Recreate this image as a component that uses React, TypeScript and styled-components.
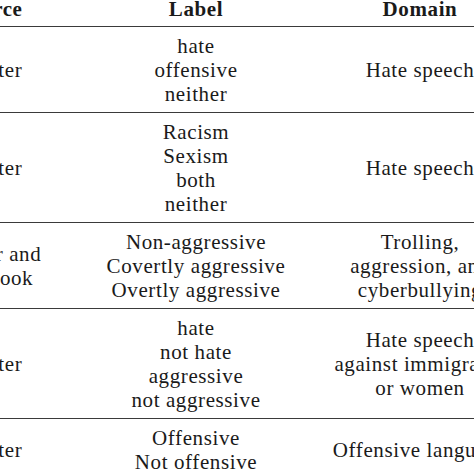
import React from "react"
import styled, { createGlobalStyle } from "styled-components"

const GlobalStyle = createGlobalStyle`
  html, body {
    margin: 0;
    padding: 0;
    background: #ffffff;
    overflow: hidden;
  }
  body {
    width: 474px;
    height: 474px;
  }
`

const COLS = "212px 200px 248px"

const Table = styled.div`
  margin: -3px 0 0 -116px;
  width: 660px;
  font-family: "Liberation Serif", "Times New Roman", serif;
  font-size: 21px;
  line-height: 24px;
  letter-spacing: 0.6px;
  color: #1a1a1a;
`

const Row = styled.div<{ $head?: boolean }>`
  display: grid;
  grid-template-columns: ${COLS};
  align-items: center;
  padding: ${(p) => (p.$head ? "0 0 5px" : "7px 0 6px")};
  border-bottom: 1px solid #3a3a3a;
  font-weight: ${(p) => (p.$head ? 700 : 400)};
`

const Cell = styled.div`
  display: flex;
  flex-direction: column;
  align-items: center;
  text-align: center;
  white-space: nowrap;
`

type Entry = { source: string[]; label: string[]; domain: string[] }

const rows: Entry[] = [
  { source: ["Twitter"], label: ["hate", "offensive", "neither"], domain: ["Hate speech"] },
  { source: ["Twitter"], label: ["Racism", "Sexism", "both", "neither"], domain: ["Hate speech"] },
  {
    source: ["Twitter and", "Facebook"],
    label: ["Non-aggressive", "Covertly aggressive", "Overtly aggressive"],
    domain: ["Trolling,", "aggression, and", "cyberbullying"],
  },
  {
    source: ["Twitter"],
    label: ["hate", "not hate", "aggressive", "not aggressive"],
    domain: ["Hate speech", "against immigrants", "or women"],
  },
  { source: ["Twitter"], label: ["Offensive", "Not offensive"], domain: ["Offensive language"] },
]

const Lines = ({ items }: { items: string[] }) => (
  <Cell>
    {items.map((t, i) => (
      <span key={i}>{t}</span>
    ))}
  </Cell>
)

export default function App() {
  return (
    <>
      <GlobalStyle />
      <Table>
        <Row $head>
          <Cell>Source</Cell>
          <Cell>Label</Cell>
          <Cell>Domain</Cell>
        </Row>
        {rows.map((r, i) => (
          <Row key={i}>
            <Lines items={r.source} />
            <Lines items={r.label} />
            <Lines items={r.domain} />
          </Row>
        ))}
      </Table>
    </>
  )
}
